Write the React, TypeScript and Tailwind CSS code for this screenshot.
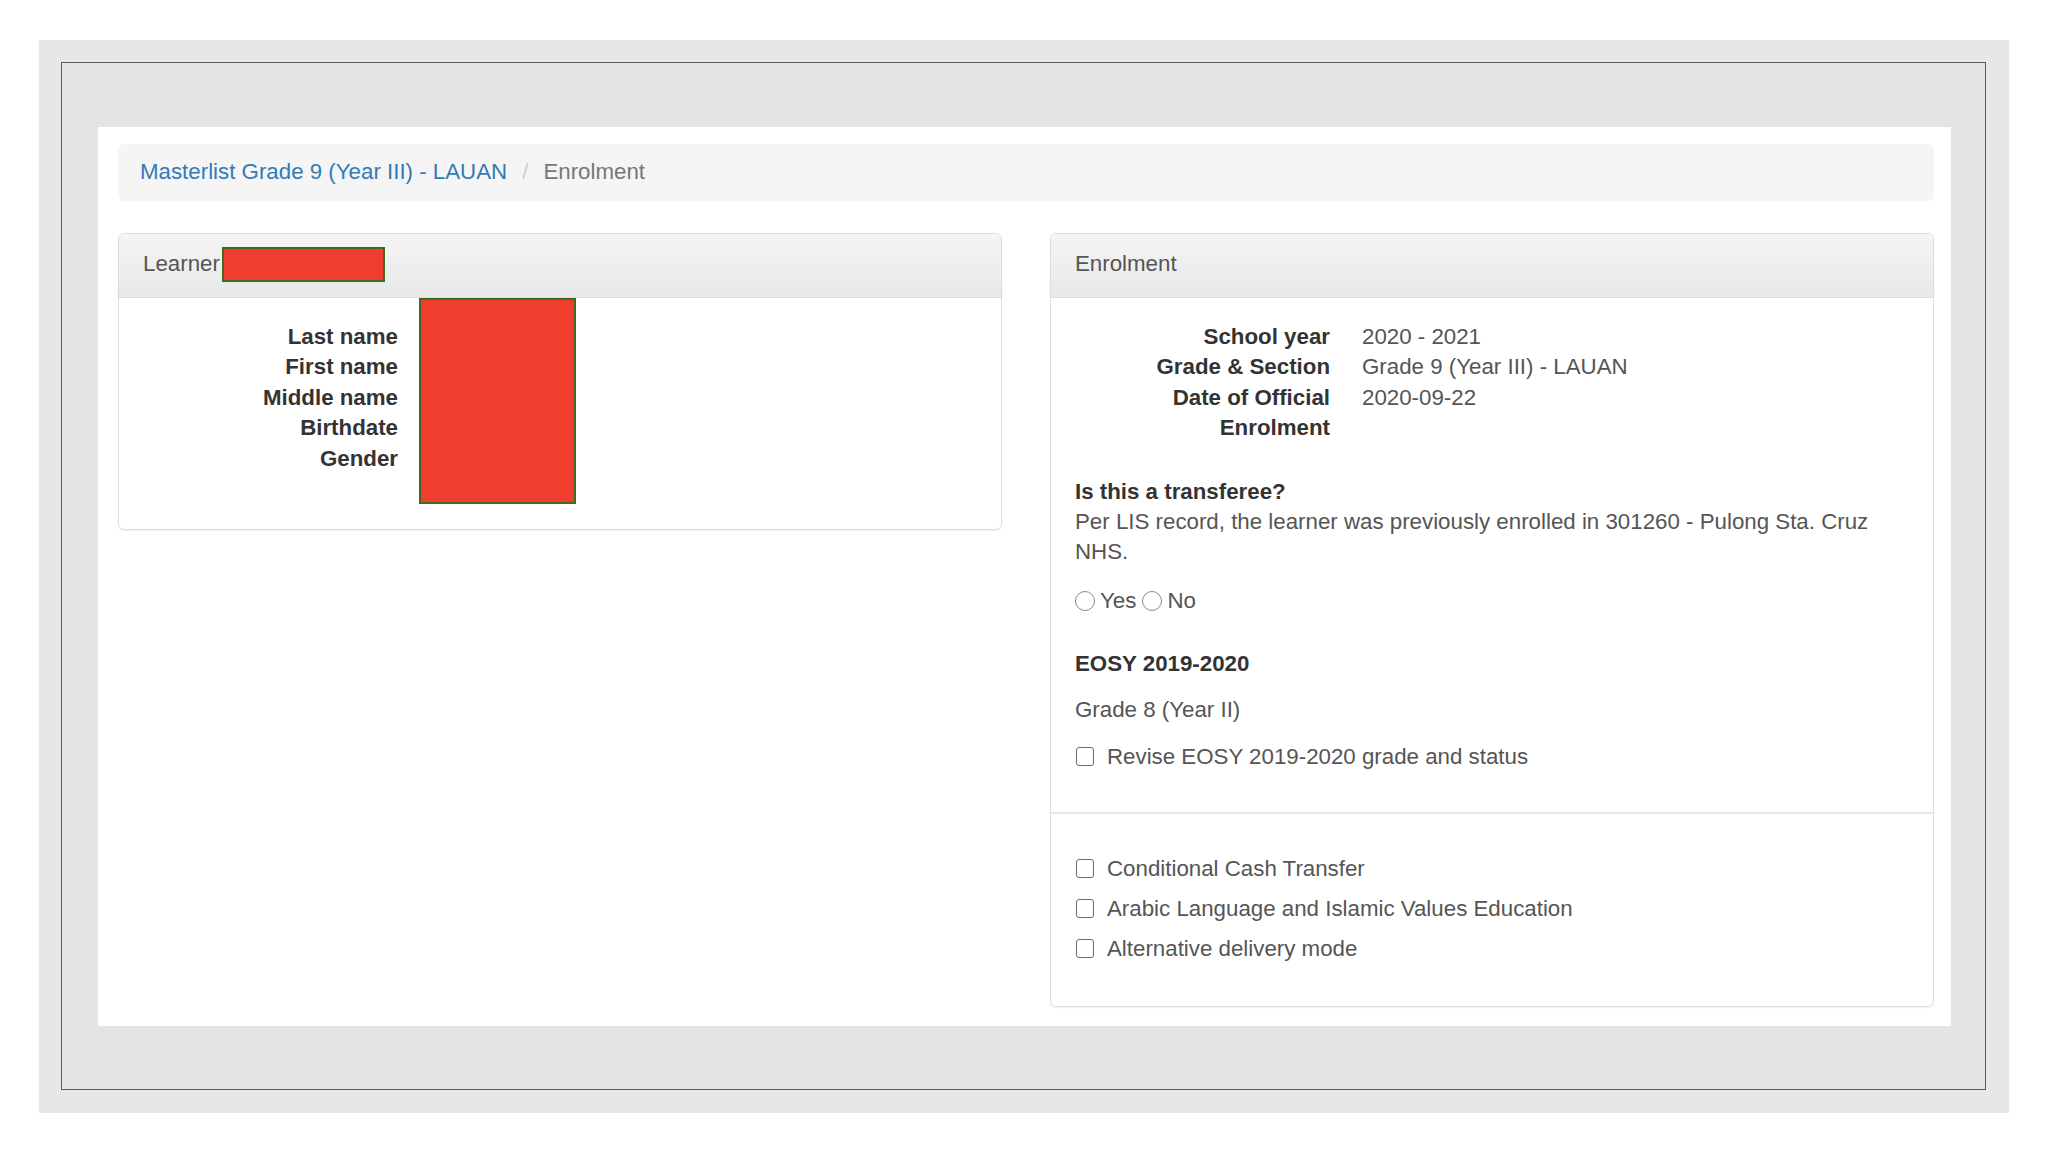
import React from "react"

const font = { fontFamily: '"Liberation Sans", Arial, sans-serif' }

function Check({ label }: { label: string }) {
  return (
    <label className="flex items-center h-[30px] text-[22.3px] text-[#555]">
      <span className="w-[18px] h-[19px] rounded-[3px] border-[1.5px] border-[#6b6b6b] bg-white ml-[1px] mr-[13px] shrink-0" />
      {label}
    </label>
  )
}

function Radio({ label }: { label: string }) {
  return (
    <label className="flex items-center h-[30px] text-[22.3px] text-[#555]">
      <span className="w-[20px] h-[20px] rounded-full border-[1.5px] border-[#8a8a8a] bg-white mr-[5px] shrink-0" />
      {label}
    </label>
  )
}

function PanelHeader({ children }: { children: React.ReactNode }) {
  return (
    <div className="h-[64px] flex items-center px-[24px] pb-[3px] border-b border-[#dddddd] rounded-t-[6px] bg-gradient-to-b from-[#f5f5f5] to-[#e8e8e8] text-[22.3px] text-[#555]">
      {children}
    </div>
  )
}

function Row({ label, value }: { label: string; value?: string }) {
  return (
    <div className="flex text-[22.3px] leading-[30.5px]">
      <div className="w-[255px] text-right font-bold text-[#333] shrink-0">{label}</div>
      <div className="pl-[32px] text-[#555]">{value}</div>
    </div>
  )
}

export default function App() {
  return (
    <div className="w-[2048px] h-[1152px] bg-white pt-[40px] pl-[39px] leading-[30px]" style={font}>
      <div className="w-[1970px] h-[1073px] bg-[#e7e7e7] pt-[22px] pl-[22px]">
        <div className="w-[1925px] h-[1028px] border-[1.5px] border-[#5a5a5a] bg-[#e4e4e6] pt-[64px] pl-[36px]">
          <div className="w-[1853px] h-[899px] bg-white pt-[17px] pl-[20px]">
            <div className="w-[1816px] h-[57px] bg-[#f5f5f6] rounded-[6px] px-[22px] pb-[2px] flex items-center text-[22.3px]">
              <span className="text-[#337ab7]">Masterlist Grade 9 (Year III) - LAUAN</span>
              <span className="text-[#cccccc] px-[15px]">/</span>
              <span className="text-[#777]">Enrolment</span>
            </div>

            <div className="flex items-start gap-[48px] mt-[32px]">
              <div className="w-[884px] border border-[#dddddd] rounded-[6px] shadow-[0_1px_2px_rgba(0,0,0,0.06)]">
                <PanelHeader>
                  <span>Learner</span>
                  <span className="ml-[2px] w-[163px] h-[35px] bg-[#ef3e2e] border-2 border-[#3f6a22]" />
                </PanelHeader>
                <div className="relative px-[24px] pt-[23.5px] pb-[55px]">
                  <Row label="Last name" />
                  <Row label="First name" />
                  <Row label="Middle name" />
                  <Row label="Birthdate" />
                  <Row label="Gender" />
                  <div className="absolute left-[300px] top-0 w-[157px] h-[206px] bg-[#ef3e2e] border-2 border-[#3f6a22]" />
                </div>
              </div>

              <div className="w-[884px] border border-[#dddddd] rounded-[6px] shadow-[0_1px_2px_rgba(0,0,0,0.06)]">
                <PanelHeader>Enrolment</PanelHeader>
                <div className="px-[24px] pt-[23.5px] pb-[40px]">
                  <Row label="School year" value="2020 - 2021" />
                  <Row label="Grade & Section" value="Grade 9 (Year III) - LAUAN" />
                  <Row label="Date of Official Enrolment" value="2020-09-22" />
                  <div className="mt-[33px] text-[22.3px] font-bold text-[#333]">Is this a transferee?</div>
                  <p className="max-w-[820px] text-[22.3px] text-[#555]">
                    Per LIS record, the learner was previously enrolled in 301260 - Pulong Sta. Cruz NHS.
                  </p>
                  <div className="flex gap-[6px] mt-[19px]">
                    <Radio label="Yes" />
                    <Radio label="No" />
                  </div>
                  <div className="mt-[33px] text-[22.3px] font-bold text-[#333]">EOSY 2019-2020</div>
                  <div className="mt-[16px] text-[22.3px] text-[#555]">Grade 8 (Year II)</div>
                  <div className="mt-[17px]">
                    <Check label="Revise EOSY 2019-2020 grade and status" />
                  </div>
                </div>
                <div className="border-t-2 border-[#e8e8e8] px-[24px] pt-[40px] pb-[42px] flex flex-col gap-[10px]">
                  <Check label="Conditional Cash Transfer" />
                  <Check label="Arabic Language and Islamic Values Education" />
                  <Check label="Alternative delivery mode" />
                </div>
              </div>
            </div>
          </div>
        </div>
      </div>
    </div>
  )
}
